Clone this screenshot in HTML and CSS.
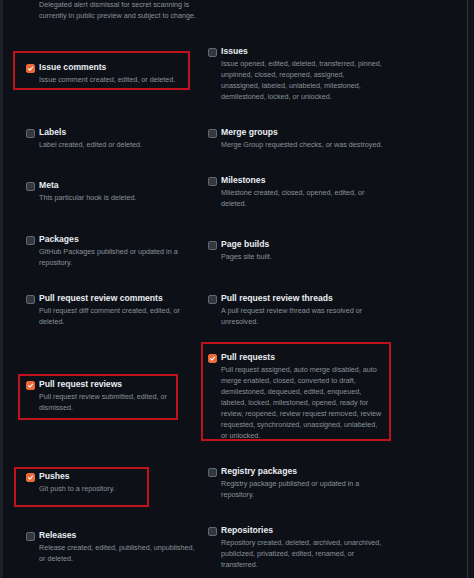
FILE: index.html
```html
<!DOCTYPE html>
<html lang="en">
<head>
<meta charset="utf-8">
<title>Webhook events</title>
<link rel="stylesheet" href="styles.css">
</head>
<body>
<div class="rail-left"></div>
<main class="main">
  <div class="events">
    <div class="item note-item">
      <span class="cb-space"></span>
      <div class="text">
        <p class="desc">Delegated alert dismissal for secret scanning is currently in public preview and subject to change.</p>
      </div>
    </div>
    <div class="item"></div>

    <div class="item">
      <span class="cb checked"><svg viewBox="0 0 10 10"><polyline points="2.2,5.2 4.2,7.2 7.9,3" /></svg></span>
      <div class="text"><div class="title">Issue comments</div><p class="desc">Issue comment created, edited, or deleted.</p></div>
    </div>
    <div class="item">
      <span class="cb"></span>
      <div class="text"><div class="title">Issues</div><p class="desc">Issue opened, edited, deleted, transferred, pinned, unpinned, closed, reopened, assigned, unassigned, labeled, unlabeled, milestoned, demilestoned, locked, or unlocked.</p></div>
    </div>

    <div class="item">
      <span class="cb"></span>
      <div class="text"><div class="title">Labels</div><p class="desc">Label created, edited or deleted.</p></div>
    </div>
    <div class="item">
      <span class="cb"></span>
      <div class="text"><div class="title">Merge groups</div><p class="desc">Merge Group requested checks, or was destroyed.</p></div>
    </div>

    <div class="item">
      <span class="cb"></span>
      <div class="text"><div class="title">Meta</div><p class="desc">This particular hook is deleted.</p></div>
    </div>
    <div class="item">
      <span class="cb"></span>
      <div class="text"><div class="title">Milestones</div><p class="desc">Milestone created, closed, opened, edited, or deleted.</p></div>
    </div>

    <div class="item">
      <span class="cb"></span>
      <div class="text"><div class="title">Packages</div><p class="desc">GitHub Packages published or updated in a repository.</p></div>
    </div>
    <div class="item">
      <span class="cb"></span>
      <div class="text"><div class="title">Page builds</div><p class="desc">Pages site built.</p></div>
    </div>

    <div class="item">
      <span class="cb"></span>
      <div class="text"><div class="title">Pull request review comments</div><p class="desc">Pull request diff comment created, edited, or deleted.</p></div>
    </div>
    <div class="item">
      <span class="cb"></span>
      <div class="text"><div class="title">Pull request review threads</div><p class="desc">A pull request review thread was resolved or unresolved.</p></div>
    </div>

    <div class="item">
      <span class="cb checked"><svg viewBox="0 0 10 10"><polyline points="2.2,5.2 4.2,7.2 7.9,3" /></svg></span>
      <div class="text"><div class="title">Pull request reviews</div><p class="desc">Pull request review submitted, edited, or dismissed.</p></div>
    </div>
    <div class="item">
      <span class="cb checked"><svg viewBox="0 0 10 10"><polyline points="2.2,5.2 4.2,7.2 7.9,3" /></svg></span>
      <div class="text"><div class="title">Pull requests</div><p class="desc">Pull request assigned, auto merge disabled, auto merge enabled, closed, converted to draft, demilestoned, dequeued, edited, enqueued, labeled, locked, milestoned, opened, ready for review, reopened, review request removed, review requested, synchronized, unassigned, unlabeled, or unlocked.</p></div>
    </div>

    <div class="item">
      <span class="cb checked"><svg viewBox="0 0 10 10"><polyline points="2.2,5.2 4.2,7.2 7.9,3" /></svg></span>
      <div class="text"><div class="title">Pushes</div><p class="desc">Git push to a repository.</p></div>
    </div>
    <div class="item">
      <span class="cb"></span>
      <div class="text"><div class="title">Registry packages</div><p class="desc">Registry package published or updated in a repository.</p></div>
    </div>

    <div class="item">
      <span class="cb"></span>
      <div class="text"><div class="title">Releases</div><p class="desc">Release created, edited, published, unpublished, or deleted.</p></div>
    </div>
    <div class="item">
      <span class="cb"></span>
      <div class="text"><div class="title">Repositories</div><p class="desc">Repository created, deleted, archived, unarchived, publicized, privatized, edited, renamed, or transferred.</p></div>
    </div>
  </div>

  <div class="mark mark-issue-comments"></div>
  <div class="mark mark-pr-reviews"></div>
  <div class="mark mark-pull-requests"></div>
  <div class="mark mark-pushes"></div>
</main>
<div class="rail-right"></div>
</body>
</html>
```

FILE: styles.css
```css
* { box-sizing: border-box; }

html, body {
  margin: 0;
  padding: 0;
  height: 100%;
}

body {
  display: flex;
  background: #0d1117;
  font-family: "Liberation Sans", Arial, sans-serif;
  overflow: hidden;
}

.rail-left {
  width: 3px;
  flex: none;
  background: #1c2128;
}

.main {
  flex: 1;
  min-width: 0;
  position: relative;
}

.rail-right {
  width: 7px;
  flex: none;
  border-left: 1px solid #30363d;
  background: #10151c;
}

.events {
  display: grid;
  grid-template-columns: 182px 182px;
  row-gap: 24px;
  align-items: center;
  padding-left: 23px;
  margin-top: -1.5px;
}

.item {
  display: flex;
  align-items: flex-start;
  gap: 4px;
  padding-right: 6px;
}

.cb-space {
  width: 9px;
  flex: none;
}

.cb {
  width: 9px;
  height: 9px;
  flex: none;
  margin-top: 3px;
  border-radius: 2px;
  background: #33383f;
  border: 1px solid #626972;
  display: flex;
  align-items: center;
  justify-content: center;
}

.cb.checked {
  background: #ec6a38;
  border-color: #ec6a38;
}

.cb svg {
  width: 9px;
  height: 9px;
  fill: none;
  stroke: #ffffff;
  stroke-width: 1.6;
  stroke-linecap: round;
  stroke-linejoin: round;
}

.text {
  flex: 1;
  min-width: 0;
}

.title {
  font-size: 8.6px;
  line-height: 13px;
  font-weight: 700;
  color: #e9edf2;
}

.desc {
  margin: 0;
  font-size: 7.2px;
  line-height: 11px;
  color: #8a9199;
}

.mark {
  position: absolute;
  border: 2px solid #c0121c;
  pointer-events: none;
}

.mark-issue-comments { left: 10px; top: 51px; width: 177px; height: 39px; }
.mark-pr-reviews { left: 15px; top: 374px; width: 160px; height: 46px; }
.mark-pull-requests { left: 198px; top: 342px; width: 190px; height: 99px; }
.mark-pushes { left: 11px; top: 467px; width: 135px; height: 40px; }
```
